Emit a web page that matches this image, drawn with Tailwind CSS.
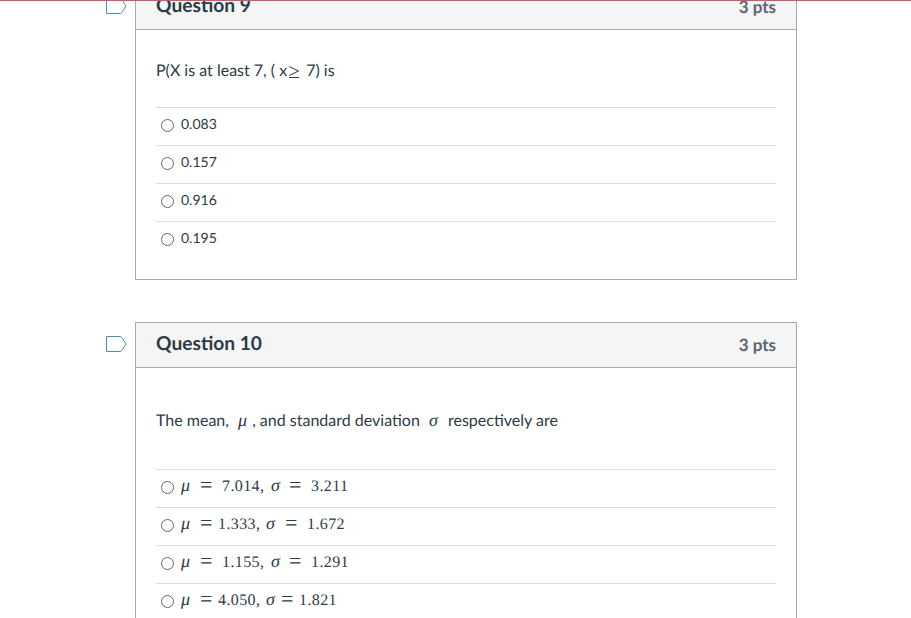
<!DOCTYPE html>
<html lang="en">

<head>
  <meta charset="UTF-8">
  <title>Quiz</title>
  <script src="https://cdn.jsdelivr.net/npm/@tailwindcss/browser@4"></script>
</head>

<body class="bg-white h-[618px] overflow-hidden relative font-['Lato','Noto_Sans',sans-serif] text-[#2d3b45] [text-rendering:geometricPrecision]">
  <!-- top rule -->
  <div class="absolute top-0 left-0 w-full h-px bg-[#b5646c] z-10"></div>

  <div class="-mt-[16px] ml-[135px] w-[662px] flex flex-col gap-[42px]">

    <!-- question 9 -->
    <div class="relative border border-[#aaaaaa]">
      <svg class="absolute -left-[30px] top-[13px]" width="21" height="17" viewBox="0 0 21 17" fill="none" stroke="#5b8ba8" stroke-width="1">
        <path d="M.5 .5H15L20 8L15 15.5H.5Z" />
      </svg>
      <div class="h-[45px] bg-[#f5f5f5] border-b border-[#aaaaaa] flex justify-between px-[20px]">
        <h2 class="text-[19.2px] font-bold leading-[20px] mt-[11px]">Question 9</h2>
        <span class="text-[17px] font-bold leading-[20px] mt-[12px] text-[#5b6670]">3 pts</span>
      </div>
      <div class="px-[20px] pt-[31px] pb-[20px]">
        <p class="text-[16px] leading-[20px] h-[46px]">P(X is at least 7, ( x<span class="inline-block w-[14px] ml-[1px] mr-[4px] font-['Liberation_Serif',serif] text-[21px] leading-none align-[-2px]">≥</span>7) is</p>
        <div class="flex flex-col text-[14px]">
          <label class="h-[38px] border-t border-[#dddddd] flex items-start pl-[5px] pt-[6px] gap-[7px] leading-[20px]"><span class="w-[13px] h-[13px] rounded-full border border-[#666666] mt-[5px]"></span><span>0.083</span></label>
          <label class="h-[38px] border-t border-[#dddddd] flex items-start pl-[5px] pt-[6px] gap-[7px] leading-[20px]"><span class="w-[13px] h-[13px] rounded-full border border-[#666666] mt-[5px]"></span><span>0.157</span></label>
          <label class="h-[38px] border-t border-[#dddddd] flex items-start pl-[5px] pt-[6px] gap-[7px] leading-[20px]"><span class="w-[13px] h-[13px] rounded-full border border-[#666666] mt-[5px]"></span><span>0.916</span></label>
          <label class="h-[38px] border-t border-[#dddddd] flex items-start pl-[5px] pt-[6px] gap-[7px] leading-[20px]"><span class="w-[13px] h-[13px] rounded-full border border-[#666666] mt-[5px]"></span><span>0.195</span></label>
        </div>
      </div>
    </div>

    <!-- question 10 -->
    <div class="relative border border-[#aaaaaa]">
      <svg class="absolute -left-[30px] top-[13px]" width="21" height="17" viewBox="0 0 21 17" fill="none" stroke="#5b8ba8" stroke-width="1">
        <path d="M.5 .5H15L20 8L15 15.5H.5Z" />
      </svg>
      <div class="h-[45px] bg-[#f5f5f5] border-b border-[#aaaaaa] flex justify-between px-[20px]">
        <h2 class="text-[19.2px] font-bold leading-[20px] mt-[11px]">Question 10</h2>
        <span class="text-[17px] font-bold leading-[20px] mt-[12px] text-[#5b6670]">3 pts</span>
      </div>
      <div class="px-[20px] pt-[42px] pb-[20px]">
        <p class="text-[16px] leading-[20px] h-[59px]">The mean, <span class="font-['Liberation_Serif',serif] italic text-[18px] ml-[5px] mr-[1px]">μ</span> , and standard deviation <span class="font-['Liberation_Serif',serif] italic text-[18px] ml-[5px] mr-[6px]">σ</span> respectively are</p>
        <div class="flex flex-col text-[16px] tracking-[0.4px] font-['Liberation_Serif',serif]">
          <label class="h-[38px] border-t border-[#dddddd] flex items-start pl-[5px] pt-[6px] gap-[7px] leading-[20px]">
            <span class="w-[13px] h-[13px] rounded-full border border-[#666666] mt-[5px]"></span>
            <span class="flex items-baseline -mt-[2px]"><i class="w-[19px] text-[18px]">μ</i><span class="w-[13px] text-center text-[22px] font-light translate-y-[1px]">=</span><span class="w-[43px] ml-[9px]">7.014,</span><i class="w-[18px] ml-[6px] text-[18px]">σ</i><span class="w-[13px] text-center text-[22px] font-light translate-y-[1px]">=</span><span class="ml-[9px]">3.211</span></span>
          </label>
          <label class="h-[38px] border-t border-[#dddddd] flex items-start pl-[5px] pt-[6px] gap-[7px] leading-[20px]">
            <span class="w-[13px] h-[13px] rounded-full border border-[#666666] mt-[5px]"></span>
            <span class="flex items-baseline -mt-[2px]"><i class="w-[19px] text-[18px]">μ</i><span class="w-[13px] text-center text-[22px] font-light translate-y-[1px]">=</span><span class="w-[43px] ml-[5px]">1.333,</span><i class="w-[19px] ml-[5px] text-[18px]">σ</i><span class="w-[13px] text-center text-[22px] font-light translate-y-[1px]">=</span><span class="ml-[9px]">1.672</span></span>
          </label>
          <label class="h-[38px] border-t border-[#dddddd] flex items-start pl-[5px] pt-[6px] gap-[7px] leading-[20px]">
            <span class="w-[13px] h-[13px] rounded-full border border-[#666666] mt-[5px]"></span>
            <span class="flex items-baseline -mt-[2px]"><i class="w-[19px] text-[18px]">μ</i><span class="w-[13px] text-center text-[22px] font-light translate-y-[1px]">=</span><span class="w-[43px] ml-[9px]">1.155,</span><i class="w-[18px] ml-[6px] text-[18px]">σ</i><span class="w-[13px] text-center text-[22px] font-light translate-y-[1px]">=</span><span class="ml-[9px]">1.291</span></span>
          </label>
          <label class="h-[38px] border-t border-[#dddddd] flex items-start pl-[5px] pt-[6px] gap-[7px] leading-[20px]">
            <span class="w-[13px] h-[13px] rounded-full border border-[#666666] mt-[5px]"></span>
            <span class="flex items-baseline -mt-[2px]"><i class="w-[19px] text-[18px]">μ</i><span class="w-[13px] text-center text-[22px] font-light translate-y-[1px]">=</span><span class="w-[43px] ml-[5px]">4.050,</span><i class="w-[15px] ml-[5px] text-[18px]">σ</i><span class="w-[13px] text-center text-[22px] font-light translate-y-[1px]">=</span><span class="ml-[5px]">1.821</span></span>
          </label>
        </div>
      </div>
    </div>

  </div>
</body>

</html>
